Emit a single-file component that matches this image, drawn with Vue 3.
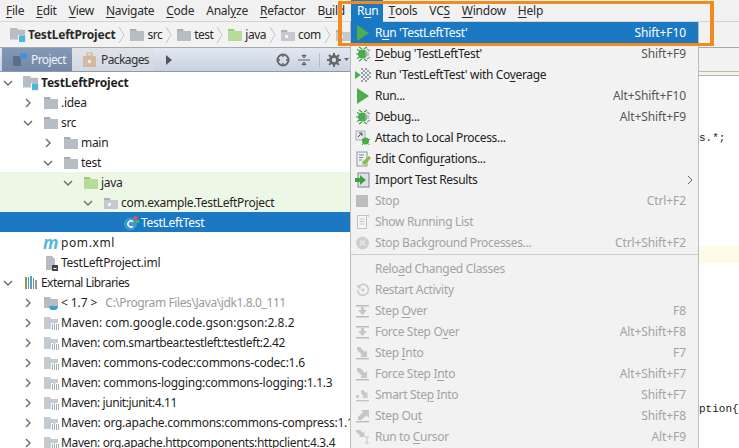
<script setup>
const menus = ['_File', '_Edit', '_View', '_Navigate', '_Code', 'Anal_yze', '_Refactor', 'B_uild']
const menusRight = ['_Tools', 'VC_S', '_Window', '_Help']

function parts(s) {
  const i = s.indexOf('_')
  if (i < 0) return [s, '', '']
  return [s.slice(0, i), s[i + 1], s.slice(i + 2)]
}

const crumbs = [
  { icon: 'module', label: 'TestLeftProject', bold: true },
  { icon: 'folder', label: 'src' },
  { icon: 'folder', label: 'test' },
  { icon: 'src', label: 'java' },
  { icon: 'package', label: 'com' },
  { icon: 'package', label: 'example' },
]

const tree = [
  { d: 0, c: 'd', icon: 'module', t: 'TestLeftProject', bold: true, ls: -0.2 },
  { d: 1, c: 'r', icon: 'folder', t: '.idea' },
  { d: 1, c: 'd', icon: 'folder', t: 'src' },
  { d: 2, c: 'r', icon: 'folder', t: 'main' },
  { d: 2, c: 'd', icon: 'folder', t: 'test' },
  { d: 3, c: 'd', icon: 'src', t: 'java', tone: 'src-row' },
  { d: 4, c: 'd', icon: 'package', t: 'com.example.TestLeftProject', tone: 'src-row' },
  { d: 5, c: '', icon: 'cls', t: 'TestLeftTest', tone: 'sel' },
  { d: 1, c: '', icon: 'maven', t: 'pom.xml', ls: 0.6 },
  { d: 1, c: '', icon: 'iml', t: 'TestLeftProject.iml', ls: -0.25 },
  { d: 0, c: 'd', icon: 'libs', t: 'External Libraries', ls: -0.55 },
  { d: 1, c: 'r', icon: 'jdk', t: '< 1.7 >', ls: -0.1, hint: 'C:\\Program Files\\Java\\jdk1.8.0_111' },
  { d: 1, c: 'r', icon: 'lib', t: 'Maven: com.google.code.gson:gson:2.8.2', ls: 0 },
  { d: 1, c: 'r', icon: 'lib', t: 'Maven: com.smartbear.testleft:testleft:2.42', ls: -0.4 },
  { d: 1, c: 'r', icon: 'lib', t: 'Maven: commons-codec:commons-codec:1.6', ls: -0.24 },
  { d: 1, c: 'r', icon: 'lib', t: 'Maven: commons-logging:commons-logging:1.1.3', ls: -0.27 },
  { d: 1, c: 'r', icon: 'lib', t: 'Maven: junit:junit:4.11', ls: -0.4 },
  { d: 1, c: 'r', icon: 'lib', t: 'Maven: org.apache.commons:commons-compress:1.1', ls: -0.26 },
  { d: 1, c: 'r', icon: 'lib', t: 'Maven: org.apache.httpcomponents:httpclient:4.3.4', ls: -0.37 },
]

const groupA = [
  { icon: 'run', t: 'R_un \'TestLeftTest\'', k: 'Shift+F10', sel: true },
  { icon: 'bug', t: '_Debug \'TestLeftTest\'', k: 'Shift+F9' },
  { icon: 'cover', t: 'Run \'TestLeftTest\' with Co_verage' },
  { icon: 'run', t: 'Run...', k: 'Alt+Shift+F10' },
  { icon: 'bug', t: 'Debug...', k: 'Alt+Shift+F9' },
  { icon: 'attach', t: 'Attach to Local Process...' },
  { icon: 'edit', t: 'Edit Configu_rations...' },
  { icon: 'import', t: 'Import Test Results', sub: true },
  { icon: 'stop', t: 'Stop', k: 'Ctrl+F2', off: true },
  { icon: 'list', t: 'Show Running List', off: true },
  { icon: 'stopbg', t: 'Stop Background Processes...', k: 'Ctrl+Shift+F2', off: true },
]
const groupB = [
  { icon: '', t: 'Relo_ad Changed Classes', off: true },
  { icon: 'restart', t: 'Restart Activity', off: true },
  { icon: 'over', t: 'Step _Over', k: 'F8', off: true },
  { icon: 'over', t: 'Force Step O_ver', k: 'Alt+Shift+F8', off: true },
  { icon: 'into', t: 'Step _Into', k: 'F7', off: true },
  { icon: 'into', t: 'Force Step I_nto', k: 'Alt+Shift+F7', off: true },
  { icon: 'smart', t: 'Smart Ste_p Into', k: 'Shift+F7', off: true },
  { icon: 'out', t: 'Step Ou_t', k: 'Shift+F8', off: true },
  { icon: 'cursor', t: 'Run to _Cursor', k: 'Alt+F9', off: true },
]
</script>

<template>
  <div class="app">
    <svg class="defs" width="0" height="0" aria-hidden="true">
      <symbol id="i-folder" viewBox="0 0 16 16"><path d="M1 2h6l1 2h7v10H1z" fill="#b6bdc4"/><path d="M1 2h6v2H1z" fill="#a4acb4"/></symbol>
      <symbol id="i-src" viewBox="0 0 16 16"><path d="M1 2h6l1 2h7v10H1z" fill="#b5dc9a"/><path d="M1 2h6v2H1z" fill="#9ccb80"/></symbol>
      <symbol id="i-package" viewBox="0 0 16 16"><path d="M1 3h6l1 2h7v9H1z" fill="#c3c9ce"/><path d="M1 3h6v2H1z" fill="#aab1b8"/><rect x="5" y="8" width="3" height="3" fill="#f4f5f6"/></symbol>
      <symbol id="i-module" viewBox="0 0 18 18"><path d="M0 1h8l1 2h8v11H0z" fill="#b6bdc4"/><rect x="10" y="10" width="7" height="7" fill="#4cb4de"/><rect x="9" y="9" width="1" height="9" fill="#fff"/></symbol>
      <symbol id="i-cls" viewBox="0 0 16 16"><circle cx="7.500" cy="9" r="6.500" fill="#3f96cf"/><path d="M10 6.800a3 3 0 1 0 0 4.400" fill="none" stroke="#fff" stroke-width="1.500"/><circle cx="12.500" cy="3" r="2" fill="#e0583f"/><path d="M13 5h3v3h-3z" fill="#5aad55"/></symbol>
      <symbol id="i-iml" viewBox="0 0 16 16"><path d="M3 1h6l3 3v6H9v5H3z" fill="#b6bcc2"/><rect x="9" y="10" width="6" height="6" fill="#444"/><rect x="10.500" y="13" width="3" height="1" fill="#fff"/></symbol>
      <symbol id="i-libs" viewBox="0 0 16 16"><path d="M2 2h2v12H2z" fill="#76a35c"/><path d="M5 2h1v12H5z" fill="#7a8a94"/><path d="M7 1h2v13H7z" fill="#55a0cb"/><path d="M10 3h1v11h-1z" fill="#7a8a94"/><path d="M12 5h2v9h-2z" fill="#8e9aa3"/></symbol>
      <symbol id="i-jdk" viewBox="0 0 16 16"><path d="M1 2h6l1 2h7v9H1z" fill="#b6bdc4"/><path d="M6 11h9l-1 3a2 2 0 0 1-2 1H9a2 2 0 0 1-2-1z" fill="#3c9fd0"/></symbol>
      <symbol id="i-lib" viewBox="0 0 16 16"><path d="M1 2h6l1 2h7v4H8v6H1z" fill="#c4cbd0"/><path d="M9 9h.8v6H9zM11 8h.8v7H11zM13 9h.8v6H13zM15 9h.8v6H15z" fill="#8d9ba5"/></symbol>
      <symbol id="i-run" viewBox="0 0 16 16"><path d="M2 0l12 8-12 8z" fill="#4cae4f"/></symbol>
      <symbol id="i-bug" viewBox="0 0 16 16"><path d="M7 3l-3-2M7 13l-3 2M9 3l3-2M9 13l3 2M5 8H1M5 5L2 3.500M5 11l-3 1.500" stroke="#3e9c46" stroke-width="1.200" fill="none"/><path d="M12 3l3 2M12 13l3-2" stroke="#8f979d" stroke-width="1.200" fill="none"/><circle cx="7.500" cy="8" r="4.600" fill="#47ad4c"/><path d="M11 4.500v7M13 6v4" stroke="#a9b0b6" stroke-width="1.400"/></symbol>
      <symbol id="i-cover" viewBox="0 0 16 16"><path d="M0 4l6 4-6 4z" fill="#4cae4f"/><path d="M6 1h2v2H6zM10 1h2v2h-2zM8 3h2v2H8zM12 3h2v2h-2zM6 5h2v2H6zM10 5h2v2h-2zM14 5h2v2h-2zM8 7h2v2H8zM12 7h2v2h-2zM6 9h2v2H6zM10 9h2v2h-2zM14 9h2v2h-2zM8 11h2v2H8zM12 11h2v2h-2zM6 13h2v2H6zM10 13h2v2h-2z" fill="#9aa1a7"/></symbol>
      <symbol id="i-attach" viewBox="0 0 16 16"><rect x="1" y="1" width="9" height="9" fill="#e6e9ec" stroke="#aab1b8"/><path d="M3 7l4-4M4 3h3v3" stroke="#555" fill="none"/><circle cx="10.500" cy="11" r="3.500" fill="#47ad4c"/><path d="M7 15l1.500-1.500M14.500 15L13 13.500M15 9l-2 1M7 9l1.500 1" stroke="#3e9c46"/></symbol>
      <symbol id="i-edit" viewBox="0 0 16 16"><rect x="2" y="1" width="10" height="14" fill="#eef0f2" stroke="#8f979d"/><path d="M4 4h5M4 6.500h4M4 9h3" stroke="#7d858c"/><path d="M14 5l2 2-6 7H7v-3z" fill="#86bf47"/><path d="M7 11v3h3z" fill="#e9c979"/></symbol>
      <symbol id="i-import" viewBox="0 0 16 16"><rect x="3" y="1" width="11" height="14" fill="#dfe2e5" stroke="#7d858c"/><path d="M0 6h5V3l6 5-6 5v-3H0z" fill="#3ea33f"/></symbol>
      <symbol id="i-stop" viewBox="0 0 16 16"><rect x="1" y="2" width="12" height="12" fill="#bdbdbd"/></symbol>
      <symbol id="i-list" viewBox="0 0 16 16"><rect x="2.500" y="1.500" width="9" height="13" fill="#f6f6f6" stroke="#c2c2c2"/><path d="M4.500 5h5M4.500 7.500h5M4.500 10h5" stroke="#c2c2c2"/><path d="M12 1h2v2" stroke="#c8c8c8" fill="none"/></symbol>
      <symbol id="i-stopbg" viewBox="0 0 16 16"><circle cx="7.500" cy="8" r="6.500" fill="#cfcfcf"/><path d="M5 5.500l5 5M10 5.500l-5 5" stroke="#e8e8e8" stroke-width="1.600"/></symbol>
      <symbol id="i-restart" viewBox="0 0 16 16"><path d="M4 4a5.500 5.500 0 1 1-1.500 4" fill="none" stroke="#c8c8c8" stroke-width="1.500"/><path d="M1 3.500h4.500V8z" fill="#c8c8c8"/><circle cx="8" cy="8" r="1.500" fill="#c8c8c8"/></symbol>
      <symbol id="i-over" viewBox="0 0 16 16"><path d="M1 2h13v1.400H1zM1 13h13v1.400H1z" fill="#bcbcbc"/><path d="M6 4h3v3h3l-4.500 5L3 7h3z" fill="#c6c6c6"/></symbol>
      <symbol id="i-into" viewBox="0 0 16 16"><path d="M1 13h13v1.400H1z" fill="#bcbcbc"/><path d="M2 2h3l5 5 2-2v7H5l2-2-5-5z" fill="#c6c6c6"/></symbol>
      <symbol id="i-smart" viewBox="0 0 16 16"><path d="M1 13h13v1.400H1z" fill="#c4c4c4"/><path d="M1 8h3v3H1zM6 3h2.500l2.500 3 1.500-1.500V11H7l1.500-1.500L6 6z" fill="#cacaca"/></symbol>
      <symbol id="i-out" viewBox="0 0 16 16"><path d="M1 13h13v1.400H1z" fill="#bcbcbc"/><path d="M6 2h8v8l-2.500-2.500L6 12H3V9l5-5z" fill="#c6c6c6"/></symbol>
      <symbol id="i-cursor" viewBox="0 0 16 16"><path d="M1 1h4l3 3 1.500-1.500V8H4l1.500-1.500L1 3z" fill="#c6c6c6"/><path d="M10 8h4M12 8v6M10 14h4" stroke="#c4c4c4" fill="none"/></symbol>
    </svg>

    <header class="menubar">
      <span v-for="m in menus" :key="m" class="top"><template v-for="(p, i) in parts(m)" :key="i"><u v-if="i === 1">{{ p }}</u><template v-else>{{ p }}</template></template></span>
      <span class="top run-top">R<u>u</u>n</span>
      <span v-for="m in menusRight" :key="m" class="top"><template v-for="(p, i) in parts(m)" :key="i"><u v-if="i === 1">{{ p }}</u><template v-else>{{ p }}</template></template></span>
    </header>

    <nav class="crumbs">
      <template v-for="(c, i) in crumbs" :key="i">
        <svg class="ic"><use :href="'#i-' + c.icon" /></svg>
        <span class="crumb" :class="{ bold: c.bold }">{{ c.label }}</span>
        <svg class="sep" width="8" height="20" viewBox="0 0 8 20"><path d="M1 2l5 8-5 8" fill="none" stroke="#c4c4c4" /></svg>
      </template>
    </nav>

    <div class="main">
      <aside class="side">
        <div class="toolbar">
          <div class="tab active">
            <svg class="ic" width="16" height="16" viewBox="0 0 16 16"><rect x="1" y="4" width="8" height="10" fill="#5d6f86"/><rect x="8" y="1" width="7" height="6" fill="#4f8fd0"/></svg>
            <span>Project</span>
          </div>
          <div class="tab">
            <svg class="ic" width="16" height="16" viewBox="0 0 16 16"><rect x="1" y="4" width="13" height="11" fill="#d6b8a0"/><rect x="5" y="1" width="5" height="3" fill="none" stroke="#c9ad98"/><rect x="6" y="8" width="3" height="3" fill="#eee"/></svg>
            <span>Packages</span>
          </div>
          <svg class="more" width="8" height="12" viewBox="0 0 8 12"><path d="M1 1l6 5-6 5z" fill="#555"/></svg>
          <div class="tools">
            <svg width="14" height="14" viewBox="0 0 14 14"><circle cx="7" cy="7" r="5.500" fill="none" stroke="#666" stroke-width="2"/><path d="M7 1v3M7 10v3M1 7h3M10 7h3" stroke="#666" stroke-width="1.500"/></svg>
            <svg width="14" height="14" viewBox="0 0 14 14"><path d="M1 7h12M7 1v3M5 2.500h4L7 5zM7 10v3M5 11.500h4L7 9z" stroke="#666" fill="none"/></svg>
            <i class="vr"></i>
            <svg width="14" height="14" viewBox="0 0 14 14"><circle cx="7" cy="7" r="3.600" fill="none" stroke="#666" stroke-width="2.800"/><path d="M7 0v14M0 7h14M2 2l10 10M12 2L2 12" stroke="#666" stroke-width="2" stroke-dasharray="2.500 9 2.500"/></svg>
            <svg class="caret" width="5" height="3" viewBox="0 0 5 3"><path d="M0 0h5L2.500 3z" fill="#666"/></svg>
          </div>
        </div>
        <div class="tree">
          <div v-for="(r, i) in tree" :key="i" class="row" :class="r.tone" :style="{ paddingLeft: 2 + 20 * r.d + 'px' }">
            <svg v-if="r.c" class="chev" width="12" height="12" viewBox="0 0 12 12">
              <path v-if="r.c === 'd'" d="M2 4l4 4 4-4" fill="none" stroke="#6b6b6b" stroke-width="1.400"/>
              <path v-else d="M4 2l4 4-4 4" fill="none" stroke="#6b6b6b" stroke-width="1.400"/>
            </svg>
            <span v-else class="chev"></span>
            <span v-if="r.icon === 'maven'" class="m">m</span>
            <svg v-else class="ic"><use :href="'#i-' + r.icon" /></svg>
            <span class="label" :class="{ bold: r.bold }" :style="r.ls !== undefined ? { letterSpacing: r.ls + 'px' } : null">{{ r.t }}</span>
            <span v-if="r.hint" class="hint">{{ r.hint }}</span>
          </div>
        </div>
      </aside>

      <section class="editor">
        <div class="tabs"><i class="tab-line"></i></div>
        <div class="code">
          <div class="line first">s.*;</div>
          <div class="line caret-row"></div>
          <div class="line last">ption{</div>
        </div>
      </section>
    </div>

    <div class="popup">
      <div v-for="(it, i) in groupA" :key="i" class="item" :class="{ sel: it.sel, off: it.off }">
        <svg class="mi"><use :href="'#i-' + it.icon" /></svg>
        <span class="mt"><template v-for="(p, j) in parts(it.t)" :key="j"><u v-if="j === 1">{{ p }}</u><template v-else>{{ p }}</template></template></span>
        <span v-if="it.k" class="mk">{{ it.k }}</span>
        <svg v-if="it.sub" class="sub" width="6" height="10" viewBox="0 0 6 10"><path d="M1 1l4 4-4 4" fill="none" stroke="#666"/></svg>
      </div>
      <div class="divider"></div>
      <div v-for="(it, i) in groupB" :key="'b' + i" class="item" :class="{ off: it.off }">
        <svg v-if="it.icon" class="mi"><use :href="'#i-' + it.icon" /></svg>
        <span v-else class="mi"></span>
        <span class="mt"><template v-for="(p, j) in parts(it.t)" :key="j"><u v-if="j === 1">{{ p }}</u><template v-else>{{ p }}</template></template></span>
        <span v-if="it.k" class="mk">{{ it.k }}</span>
      </div>
    </div>

    <div class="callout"></div>
  </div>
</template>

<style scoped>
.app {
  position: relative;
  width: 739px;
  height: 448px;
  overflow: hidden;
  background: #fff;
  display: flex;
  flex-direction: column;
  font: 12px/20px "Noto Sans", sans-serif;
  color: #1f1f1f;
}
.defs { position: absolute; }
u { text-underline-offset: 2px; text-decoration-thickness: 1px; }
.menubar {
  height: 21px;
  flex: none;
  display: flex;
  align-items: stretch;
  background: #f1f1f1;
  border-bottom: 1px solid #d4d4d4;
  letter-spacing: -0.25px;
}
.top { color: #2a2a2a; padding: 0 6px; display: flex; align-items: center; white-space: pre; }
.run-top { background: #1b79c4; color: #fff; margin-bottom: -1px; padding-right: 4px; }
.crumbs {
  height: 25px;
  flex: none;
  display: flex;
  align-items: center;
  background: #f2f2f2;
  padding-left: 10px;
  border-bottom: 1px solid #a9a9a9;
  letter-spacing: -0.5px;
}
.crumbs .ic { margin-right: 2px; }
.crumb { color: #2a2a2a; }
.crumb.bold { letter-spacing: -0.2px; }
.sep { margin: 0 3px; flex: none; }
.bold { font-weight: 700; }
.ic { width: 16px; height: 16px; flex: none; }
.main { flex: 1; display: flex; min-height: 0; }
.side { width: 350px; flex: none; }
.toolbar {
  height: 24px;
  display: flex;
  align-items: stretch;
  background: linear-gradient(#e2e8f2, #c8d2e2);
  border-bottom: 1px solid #8f9aa9;
  box-sizing: border-box;
  padding-left: 2px;
}
.tab {
  display: flex;
  align-items: center;
  gap: 3px;
  padding: 0 5px 0 10px;
  color: #333;
  letter-spacing: -0.6px;
  background: linear-gradient(#dfe3ea, #d2d8e1);
}
.tab.active { background: linear-gradient(#8398b6, #7489a9); color: #eef2f7; padding-right: 6px; }
.more { align-self: center; margin-left: 11px; flex: none; }
.tools { margin-left: 103px; display: flex; align-items: center; gap: 7px; }
.vr { width: 1px; height: 14px; background: #b3bccb; margin-left: 1px; }
.caret { margin-left: -4px; }
.row {
  height: 20px;
  display: flex;
  align-items: center;
  box-sizing: border-box;
  padding-top: 2px;
  white-space: nowrap;
  letter-spacing: -0.3px;
}
.row.src-row { background: #edf7e6; }
.row.sel { background: #1b79c4; color: #fff; }
.chev { width: 12px; height: 12px; flex: none; margin-right: 9px; }
.row .ic { margin-right: 2px; }
.m { width: 16px; margin-right: 2px; font: italic 700 17px/16px "Noto Sans", sans-serif; color: #4fb9d9; flex: none; letter-spacing: 0; }
.hint { color: #9a9a9a; margin-left: 8px; letter-spacing: -0.4px; }
.editor { flex: 1; min-width: 0; }
.tabs {
  height: 28px;
  box-sizing: border-box;
  background: #f2f2f2;
  border-bottom: 1px solid #b5b5b5;
  padding-top: 23px;
}
.tab-line { display: block; height: 1px; background: #a9c79c; }
.code { font: 11px/17px "Liberation Mono", monospace; color: #222; padding-left: 349px; }
.line { height: 17px; white-space: nowrap; }
.first { margin-top: 54px; }
.caret-row { background: #fefbe9; margin: 99px 0 0 -349px; }
.last { margin-top: 138px; }
.popup {
  position: absolute;
  left: 350px;
  top: 22px;
  width: 349px;
  height: 430px;
  box-sizing: border-box;
  background: #f2f2f2;
  border-left: 1px solid #bdbdbd;
  border-right: 1px solid #bdbdbd;
}
.item { height: 21px; display: flex; align-items: center; padding: 0 12px 0 4px; white-space: nowrap; color: #222; }
.item.sel { background: #1b79c4; color: #fff; }
.item.sel .mk { color: #fff; }
.item.off { color: #a3a3a3; }
.mi { width: 16px; height: 16px; flex: none; margin-right: 4px; }
.mt { flex: 1; letter-spacing: -0.33px; }
.mk { color: #555; letter-spacing: -0.1px; }
.item.off .mk { color: #a3a3a3; }
.sub { margin-right: -7px; }
.divider { height: 1px; background: #cdcdcd; margin: 1px 0 3px; }
.callout {
  position: absolute;
  left: 338px;
  top: 1px;
  width: 376px;
  height: 45px;
  box-sizing: border-box;
  border: 3px solid #f28b1d;
  border-width: 3px 4px;
}
</style>
